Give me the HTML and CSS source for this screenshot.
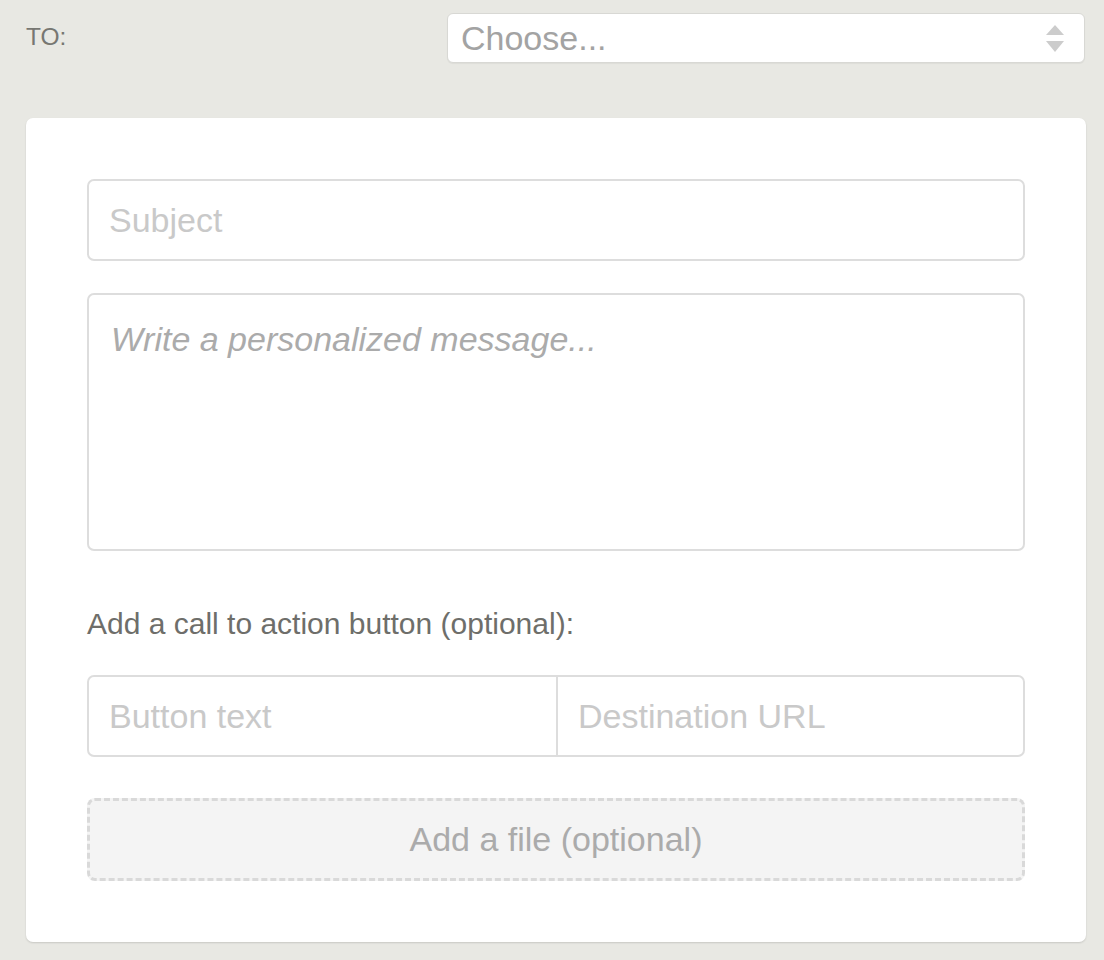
FILE: index.html
```html
<!DOCTYPE html>
<html lang="en">
<head>
<meta charset="utf-8">
<title>Send message</title>
<link rel="stylesheet" href="styles.css">
</head>
<body>
<div class="page">
  <div class="to-row">
    <label class="to-label">TO:</label>
    <div class="select">
      <span class="select-text">Choose...</span>
      <svg class="select-arrows" width="18" height="28" viewBox="0 0 18 28" aria-hidden="true">
        <polygon points="9,0 18,10 0,10" fill="#cccccc"/>
        <polygon points="0,16 18,16 9,27" fill="#cccccc"/>
      </svg>
    </div>
  </div>

  <div class="card">
    <input class="field subject" type="text" placeholder="Subject">
    <textarea class="field message" placeholder="Write a personalized message..."></textarea>

    <div class="cta-label">Add a call to action button (optional):</div>
    <div class="cta-row">
      <input class="cta-input" type="text" placeholder="Button text">
      <input class="cta-input cta-url" type="text" placeholder="Destination URL">
    </div>

    <div class="dropzone">Add a file (optional)</div>
  </div>
</div>
</body>
</html>
```

FILE: styles.css
```css
html, body {
  margin: 0;
  padding: 0;
  background: #e8e8e3;
}

body {
  font-family: "Liberation Sans", Arial, Helvetica, sans-serif;
}

.page {
  padding: 13px 18px 18px 26px;
}

.to-row {
  display: grid;
  grid-template-columns: 421px 1fr;
  align-items: start;
  padding-right: 1px;
}

.to-label {
  font-size: 24.5px;
  line-height: 28px;
  color: #777772;
  padding-top: 10px;
}

.select {
  height: 48px;
  background: #ffffff;
  border: 1px solid #d8d8d4;
  border-radius: 6px;
  box-shadow: 0 1px 1px rgba(0, 0, 0, 0.05);
  display: flex;
  align-items: center;
  justify-content: space-between;
  padding: 0 20px 0 13px;
}

.select-text {
  font-size: 34px;
  line-height: 48px;
  color: #a3a3a3;
}

.select-arrows {
  display: block;
  margin-top: 2px;
}

.card {
  margin-top: 55px;
  background: #ffffff;
  border-radius: 7px;
  box-shadow: 0 1px 2px rgba(0, 0, 0, 0.14);
  padding: 61px;
  display: flex;
  flex-direction: column;
}

.field {
  box-sizing: border-box;
  width: 100%;
  border: 2px solid #dddddd;
  border-radius: 7px;
  background: #ffffff;
  font-family: "Liberation Sans", Arial, Helvetica, sans-serif;
  font-size: 34px;
  color: #555555;
  outline: none;
  margin: 0;
}

.subject {
  height: 82px;
  padding: 0 20px;
}

.subject::placeholder {
  color: #c9c9c9;
}

.message {
  display: block;
  margin-top: 32px;
  height: 258px;
  padding: 24px 22px;
  line-height: 40px;
  font-style: italic;
  resize: none;
}

.message::placeholder {
  color: #ababab;
}

.cta-label {
  margin-top: 55px;
  font-size: 30px;
  line-height: 36px;
  color: #6e6e6a;
}

.cta-row {
  margin-top: 33px;
  display: grid;
  grid-template-columns: 1fr 1fr;
  border: 2px solid #dddddd;
  border-radius: 7px;
  height: 82px;
  box-sizing: border-box;
  overflow: hidden;
}

.cta-input {
  box-sizing: border-box;
  min-width: 0;
  border: 0;
  margin: 0;
  padding: 0 20px;
  height: 78px;
  background: transparent;
  font-family: "Liberation Sans", Arial, Helvetica, sans-serif;
  font-size: 34px;
  color: #555555;
  outline: none;
}

.cta-url {
  border-left: 2px solid #dddddd;
}

.cta-input::placeholder {
  color: #c9c9c9;
}

.dropzone {
  margin-top: 41px;
  height: 83px;
  box-sizing: border-box;
  background: #f4f4f4;
  border: 3px dashed #d9d9d9;
  border-radius: 8px;
  display: flex;
  align-items: center;
  justify-content: center;
  font-size: 34px;
  color: #ababab;
}
```
